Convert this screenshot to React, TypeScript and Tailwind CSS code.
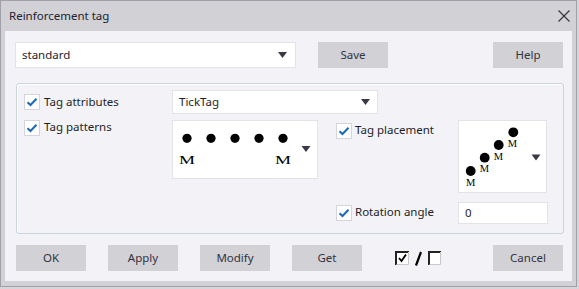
import React from "react";

const font = { fontFamily: '"Noto Sans", "Open Sans", sans-serif' };

function Arrow() {
  return (
    <svg width="9" height="6" viewBox="0 0 9 6" className="shrink-0">
      <path d="M0 0 H9 L4.5 6 Z" fill="#3a3a44" />
    </svg>
  );
}

function Check() {
  return (
    <div className="w-[16px] h-[16px] bg-white border border-[#d4d4dc] flex items-center justify-center shrink-0">
      <svg width="12" height="10" viewBox="0 0 12 10">
        <path d="M1.5 5.2 L4.5 8 L10.5 1.8" fill="none" stroke="#1c69b8" strokeWidth="2" />
      </svg>
    </div>
  );
}

function Btn({ label }: { label: string }) {
  return (
    <div className="w-[70px] h-[26px] bg-[#d1d1d6] flex items-center justify-center text-[11.5px] text-[#333340] shrink-0">
      {label}
    </div>
  );
}

const serif = '"Liberation Serif", "Times New Roman", serif';

export default function App() {
  return (
    <div className="w-[579px] h-[289px] bg-[#d6d6da] overflow-hidden" style={font}>
      <div className="w-[577px] h-[287px] border border-[#a0a0a8] bg-[#d1d1d6] flex flex-col">
        <div className="h-[30px] flex items-center justify-between pl-[8px] pr-[6px] shrink-0">
          <span className="text-[11.5px] text-[#222230]">Reinforcement tag</span>
          <svg width="12" height="12" viewBox="0 0 12 12">
            <path d="M0.5 0.5 L11.5 11.5 M11.5 0.5 L0.5 11.5" stroke="#333" strokeWidth="1.1" />
          </svg>
        </div>
        <div className="ml-[4px] mr-[4px] h-[250px] bg-[#f2f2f7] flex flex-col pl-[10px] pr-[9px] pt-[11px]">
          <div className="flex items-center">
            <div className="w-[281px] h-[26px] bg-white border border-[#e2e2e8] flex items-center justify-between pl-[6px] pr-[8px] text-[11.5px] text-[#222230]">
              <span>standard</span>
              <Arrow />
            </div>
            <div className="ml-[22px]">
              <Btn label="Save" />
            </div>
            <div className="flex-1" />
            <Btn label="Help" />
          </div>

          <div className="mt-[15px] ml-[1px] w-[548px] h-[151px] border border-[#cdd5dc] rounded-[3px] shadow-[inset_1px_1px_0_#ffffff] pl-[7px] pt-[6px] flex flex-col text-[11.5px] text-[#1e1e28]">
            <div className="flex items-center">
              <div className="w-[148px] flex items-center gap-[4px]">
                <Check />
                <span className="-mt-[1px]">Tag attributes</span>
              </div>
              <div className="w-[206px] h-[24px] bg-white border border-[#e2e2e8] flex items-center justify-between pl-[6px] pr-[7px]">
                <span>TickTag</span>
                <Arrow />
              </div>
            </div>

            <div className="flex items-start mt-[6px]">
              <div className="w-[148px] flex items-center gap-[4px]">
                <Check />
                <span className="-mt-[2px]">Tag patterns</span>
              </div>
              <div className="w-[146px] h-[59px] bg-white border border-[#e2e2e8]">
                <svg width="144" height="57" viewBox="0 0 144 57">
                  {[14, 38, 62, 86, 110].map((x) => (
                    <circle key={x} cx={x} cy={17.3} r={4.6} fill="#000" />
                  ))}
                  <text x="6" y="42.5" fontFamily={serif} fontSize="13" textLength="16" lengthAdjust="spacingAndGlyphs" fill="#000">M</text>
                  <text x="102" y="42.5" fontFamily={serif} fontSize="13" textLength="16" lengthAdjust="spacingAndGlyphs" fill="#000">M</text>
                  <path d="M128.5 25 H137.5 L133 31 Z" fill="#3a3a44" />
                </svg>
              </div>
              <div className="ml-[18px] w-[122px] flex items-center gap-[3px] mt-[3px]">
                <Check />
                <span className="-mt-[2px]">Tag placement</span>
              </div>
              <div className="w-[89px] h-[73px] bg-white border border-[#e2e2e8]">
                <svg width="87" height="71" viewBox="0 0 87 71">
                  {[
                    [54.3, 11.3],
                    [39.7, 24],
                    [25.7, 36.7],
                    [11.7, 50],
                  ].map(([x, y], i) => (
                    <circle key={i} cx={x} cy={y} r={4.9} fill="#000" />
                  ))}
                  {[
                    [53.3, 22.3],
                    [39.3, 35.7],
                    [25.3, 47.3],
                    [11.7, 61.3],
                  ].map(([x, y], i) => (
                    <text key={i} x={x} y={y + 3.5} textAnchor="middle" fontFamily={serif} fontSize="10.5" fill="#000">M</text>
                  ))}
                  <path d="M72.5 33.5 H81.5 L77 39.5 Z" fill="#3a3a44" />
                </svg>
              </div>
            </div>

            <div className="flex items-center mt-[9px] pl-[312px]">
              <div className="w-[122px] flex items-center gap-[3px]">
                <Check />
                <span className="-mt-[2px]">Rotation angle</span>
              </div>
              <div className="w-[90px] h-[22px] bg-white border border-[#e2e2e8] flex items-center pl-[6px]">
                0
              </div>
            </div>
          </div>

          <div className="flex items-center mt-[11px] ml-[1px] gap-[22px]">
            <Btn label="OK" />
            <Btn label="Apply" />
            <Btn label="Modify" />
            <Btn label="Get" />
            <div className="ml-[11px] flex items-center">
              <svg width="46" height="16" viewBox="0 0 46 16">
                <rect x="0.5" y="1.5" width="13" height="13" fill="#fff" />
                <path d="M1 15 V2 H14" fill="none" stroke="#222" strokeWidth="2" />
                <path d="M1.5 14.5 H13.5 V2" fill="none" stroke="#c8c8c8" strokeWidth="1" />
                <path d="M4 8 L6.5 11 L11 4.5" fill="none" stroke="#000" strokeWidth="1.8" />
                <path d="M21 15.5 L26 2" stroke="#000" strokeWidth="2.2" />
                <rect x="33.5" y="1.5" width="12" height="13" fill="#fff" />
                <path d="M34 15 V2 H46" fill="none" stroke="#222" strokeWidth="2" />
                <path d="M34.5 14.5 H45.5 V2" fill="none" stroke="#c8c8c8" strokeWidth="1" />
              </svg>
            </div>
            <div className="flex-1" />
            <Btn label="Cancel" />
          </div>
        </div>
      </div>
    </div>
  );
}
